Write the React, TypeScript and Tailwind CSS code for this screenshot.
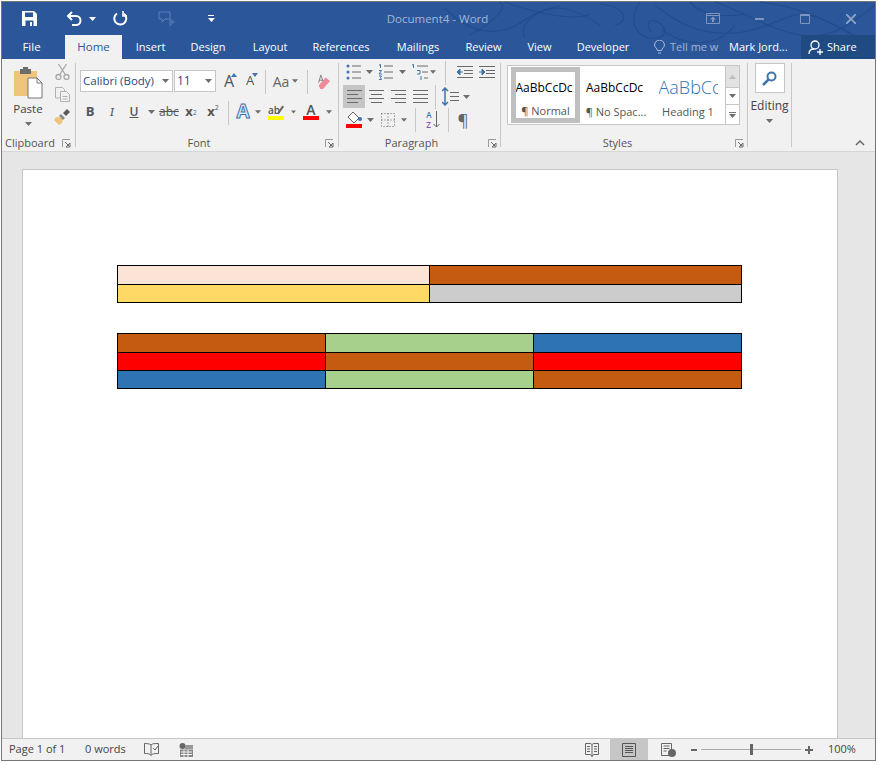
import React from "react";

const Caret = ({ c = "#6e6e6e" }: { c?: string }) => (
  <svg width="7" height="4" viewBox="0 0 7 4"><path d="M0 0h7L3.5 4z" fill={c} /></svg>
);

const Launcher = () => (
  <svg width="9" height="9" viewBox="0 0 9 9" fill="none">
    <path d="M0.5 8V0.5H8" stroke="#9a9a9a" />
    <path d="M3 3l4 4M8 4v4H4z" stroke="#6b6b6b" />
  </svg>
);

const VSep = ({ className }: { className: string }) => (
  <div className={`flex justify-center ${className}`}>
    <div className="w-px h-[24px] bg-[#c6c6c6]" />
  </div>
);

const Lines = ({ ys, x1, x2 }: { ys: number[]; x1: number[]; x2: number[] }) => (
  <>
    {ys.map((y, i) => (
      <path key={i} d={`M${x1[i]} ${y}H${x2[i]}`} stroke="#6a6a6a" />
    ))}
  </>
);

const Align = ({ kind }: { kind: "l" | "c" | "r" | "j" }) => {
  const x1 = kind === "l" || kind === "j" ? [1, 1, 1, 1] : kind === "c" ? [1, 3, 1, 3] : [1, 5, 1, 5];
  const x2 = kind === "j" ? [16, 16, 16, 16] : kind === "l" ? [16, 12, 16, 12] : kind === "c" ? [16, 14, 16, 14] : [16, 16, 16, 16];
  return (
    <svg width="17" height="15" viewBox="0 0 17 15" fill="none">
      <Lines ys={[1.5, 5.5, 9.5, 13.5]} x1={x1} x2={x2} />
    </svg>
  );
};

const Swirls = () => (
  <svg className="absolute left-0 top-[-2px] pointer-events-none" width="873" height="59" viewBox="2 0 873 59" fill="none" stroke="#234d8b" strokeWidth="1.200">
    <path d="M445 8C470 35 500 38 525 20S570 5 600 25" />
    <path d="M505 2C530 12 575 22 590 14" />
    <path d="M525 38C518 25 535 10 560 6" />
    <path d="M640 2C630 15 632 36 650 38S668 28 658 22 645 28 652 32" />
    <path d="M600 4C625 6 630 22 615 25" />
    <path d="M655 5C680 25 700 35 735 33" />
    <path d="M735 33C770 30 790 10 810 15 830 20 860 40 875 45" />
    <path d="M715 2C740 10 770 30 800 35S850 25 875 5" />
    <path d="M760 2C790 5 830 20 850 34" />
    <path d="M662 30C690 50 720 45 735 25" />
    <path d="M470 35C490 24 510 8 500 2" />
    <path d="M690 2C700 14 720 18 745 14" />
  </svg>
);

function TitleBar() {
  return (
    <div className="relative h-[33px] flex items-center text-[#dfe7f2]">
      <Swirls />
      <div className="w-[17px] shrink-0" />
      <div className="relative w-[20px] flex justify-center">
        <svg width="15" height="15" viewBox="0 0 15 15"><path d="M0 0h12l3 3v12H0z" fill="#fff" /><path d="M3 1.500h8v4.500H3z" fill="#2b579a" /><path d="M3.500 9.500h8V15h-8z" fill="#2b579a" /><path d="M8 11h2v4H8z" fill="#fff" /></svg>
      </div>
      <div className="w-[24px]" />
      <div className="relative w-[22px] flex justify-center">
        <svg width="16" height="15" viewBox="0 0 16 15" fill="none" stroke="#fff" strokeWidth="2"><path d="M6 1L2 5l4 4" /><path d="M2 5h8a4.500 4.500 0 0 1 0 9H6" /></svg>
      </div>
      <div className="relative w-[14px] flex justify-center"><Caret c="#fff" /></div>
      <div className="w-[10px]" />
      <div className="relative w-[22px] flex justify-center">
        <svg width="15" height="15" viewBox="0 0 15 15" fill="none" stroke="#fff" strokeWidth="2"><path d="M4 2.500A6 6 0 1 0 11 2.800" /><path d="M10 0v5h4" strokeWidth="1.600" /></svg>
      </div>
      <div className="w-[24px]" />
      <div className="relative w-[22px] flex justify-center">
        <svg width="18" height="16" viewBox="0 0 18 16" fill="none"><path d="M2 1h11v7H8l-3 3V8H2z" stroke="#5f7fb4" /><path d="M12 6l6 5-6 5z" fill="#4a6ea8" /></svg>
      </div>
      <div className="w-[23px]" />
      <div className="relative w-[22px] flex flex-col items-center gap-[2px]">
        <div className="w-[6px] h-px bg-white" />
        <Caret c="#fff" />
      </div>
      <div className="flex-1 text-center text-[11.5px] text-[#a4b6d2] pr-[36px] relative">Document4 - Word</div>
      <div className="flex items-center relative">
        <div className="w-[47px] flex justify-center">
          <svg width="14" height="11" viewBox="0 0 14 11" fill="none"><path d="M.5.500h13v10H.5z" stroke="#7f97c0" /><path d="M.5 2.500h13" stroke="#7f97c0" /><path d="M7 3.500l3 3H8V9H6V6.500H4z" fill="#7f97c0" /></svg>
        </div>
        <div className="w-[46px] flex justify-center"><div className="w-[9px] h-[2px] bg-[#7f97c0]" /></div>
        <div className="w-[46px] flex justify-center">
          <svg width="10" height="10" viewBox="0 0 10 10" fill="none"><path d="M.5.500h9v9h-9z" stroke="#7f97c0" /><path d="M0 1.500h10" stroke="#7f97c0" /></svg>
        </div>
        <div className="w-[46px] flex justify-center">
          <svg width="10" height="10" viewBox="0 0 10 10" stroke="#8fa5c8" strokeWidth="1.800"><path d="M0 0l10 10M10 0L0 10" /></svg>
        </div>
        <div className="w-px" />
      </div>
    </div>
  );
}

function TabsRow() {
  return (
    <div className="relative h-[24px] flex items-stretch text-[11px] text-white leading-[24px] text-center">
      <div className="w-[59px] text-[11.500px]">File</div>
      <div className="w-[4px]" />
      <div className="w-[57px] bg-[#f1f1f1] text-[#2b579a] text-[11.500px]">Home</div>
      <div className="w-[57px]">Insert</div>
      <div className="w-[58px]">Design</div>
      <div className="w-[66px]">Layout</div>
      <div className="w-[76px]">References</div>
      <div className="w-[78px]">Mailings</div>
      <div className="w-[53px]">Review</div>
      <div className="w-[59px]">View</div>
      <div className="w-[68px]">Developer</div>
      <div className="w-[16px]" />
      <div className="w-[12px] flex items-center justify-center">
        <svg width="11" height="15" viewBox="0 0 11 15" fill="none" stroke="#aebfd9"><path d="M3.500 10.500C3 8 .6 7.500.6 5a4.900 4.900 0 0 1 9.800 0c0 2.500-2.400 3-2.900 5.500z" /><path d="M4 13h3" /></svg>
      </div>
      <div className="w-[49px] ml-[5px] overflow-hidden text-left text-[#a4b6d2]">Tell me w</div>
      <div className="w-[10px]" />
      <div className="w-[61px] whitespace-nowrap text-left">Mark Jord...</div>
      <div className="w-[11px]" />
      <div className="flex-1 bg-[#1f4a82] flex items-center pl-[7px] gap-[3px]">
        <svg width="16" height="15" viewBox="0 0 16 15" fill="none" stroke="#fff" strokeWidth="1.300"><circle cx="7" cy="5" r="4" /><path d="M1 14c0-3 2-5 5-5M9 12h6M12 9v6" /></svg>
        <span>Share</span>
      </div>
    </div>
  );
}

const Bullets = () => (
  <svg width="15" height="16" viewBox="0 0 15 16" fill="none">
    <circle cx="2" cy="2" r="1.500" fill="#3f73ad" /><circle cx="2" cy="8" r="1.500" fill="#3f73ad" /><circle cx="2" cy="14" r="1.500" fill="#3f73ad" />
    <path d="M6 2h9M6 8h9M6 14h9" stroke="#6a6a6a" />
  </svg>
);
const Numbered = () => (
  <svg width="15" height="16" viewBox="0 0 15 16" fill="none">
    <path d="M1 1l1.500-.5V4M1 6.500h2.500L1 10h3M1 12h2.500l-1 1.500 1 2H1" stroke="#3f73ad" />
    <path d="M6 2h9M6 8h9M6 14h9" stroke="#6a6a6a" />
  </svg>
);
const Multi = () => (
  <svg width="17" height="16" viewBox="0 0 17 16" fill="none">
    <path d="M1 1l1.500-.5V4M6 6.500h3V10H6M10 12v4" stroke="#3f73ad" />
    <path d="M6 2h11M11 8h6M13 14h4" stroke="#6a6a6a" />
  </svg>
);
const Indent = ({ flip }: { flip?: boolean }) => (
  <svg width="16" height="12" viewBox="0 0 16 12" fill="none">
    <path d="M0 .5h16M7 4.500h9M7 7.500h9M0 11.500h16" stroke="#6a6a6a" />
    {flip ? <path d="M6 6H3M3 3L0 6l3 3z" fill="#3f73ad" stroke="#3f73ad" /> : <path d="M0 6h3M3 3l3 3-3 3z" fill="#3f73ad" stroke="#3f73ad" />}
  </svg>
);

const Label = ({ children }: { children: React.ReactNode }) => (
  <div className="mt-auto h-[16px] flex items-center text-[11px] text-[#555]">{children}</div>
);

const Cell = ({ className, children }: { className: string; children?: React.ReactNode }) => (
  <div className={`flex items-center justify-center ${className}`}>{children}</div>
);

function Clipboard() {
  return (
    <div className="w-[73px] flex flex-col">
      <div className="flex-1 flex">
        <div className="w-[7px]" />
        <div className="w-[38px] flex flex-col items-center pt-[8px]">
          <svg width="30" height="32" viewBox="0 0 30 32" fill="none">
            <path d="M1 4h23v25H1z" fill="#efc47d" />
            <path d="M7 2h11v5H7z" fill="#6d6d6d" /><path d="M10 0h5v3h-5z" fill="#6d6d6d" />
            <path d="M15 11h9l5 5v15H15z" fill="#fff" stroke="#777" />
            <path d="M24 11v5h5" stroke="#777" />
          </svg>
          <div className="text-[11.500px] leading-[16px] mt-[2px] text-[#444]">Paste</div>
          <div className="mt-[5px]"><Caret /></div>
        </div>
        <div className="w-[7px]" />
        <div className="w-[16px] flex flex-col items-center pt-[5px] gap-[7px]">
          <svg width="15" height="16" viewBox="0 0 15 16" fill="none" stroke="#a8a8a8" strokeWidth="1.300"><circle cx="3.500" cy="13" r="2.500" /><circle cx="11.500" cy="13" r="2.500" /><path d="M4.500 11L11.500 0M10.500 11L3.500 0" /></svg>
          <svg width="15" height="15" viewBox="0 0 15 15" fill="#f1f1f1" stroke="#b2b2b2"><path d="M.5.500h7l2 2V11H.5z" /><path d="M5.500 4.500h6l3 3v7h-9z" /><path d="M7.500 9.500h5M7.500 12h5" /></svg>
          <svg width="16" height="16" viewBox="0 0 16 16"><path d="M9 9L2 8l-2 3 5 5 3-2z" fill="#efc47d" /><path d="M7 5l4 4-2 2-4-4z" fill="#8a8a8a" /><path d="M9 4l4-4 3 3-4 4z" fill="#5a5a5a" /></svg>
        </div>
      </div>
      <Label><span className="pl-[3px]">Clipboard</span><span className="ml-auto mr-[4px] flex"><Launcher /></span></Label>
    </div>
  );
}

const BigA = ({ size }: { size: "lg" | "sm" }) => (
  <span className={`relative font-normal text-[#555] ${size === "lg" ? "text-[16px]" : "text-[13px]"}`}>A</span>
);

function Font() {
  return (
    <div className="w-[262px] flex flex-col">
      <div className="flex h-[33px] items-end pl-[4px]">
        <div className="w-[93px] h-[22px] bg-white border border-[#c6c6c6] flex items-center pl-[2px] pr-[3px] text-[11.500px] text-[#2b4a7d]">
          <span className="flex-1 whitespace-nowrap">Calibri (Body)</span><Caret />
        </div>
        <div className="ml-px w-[42px] h-[22px] bg-white border border-[#c6c6c6] flex items-center pl-[2px] pr-[3px] text-[12px] text-[#2b4a7d]">
          <span className="flex-1">11</span><Caret />
        </div>
        <Cell className="w-[22px] h-[22px] ml-[2px] relative">
          <BigA size="lg" />
          <svg className="absolute right-[3px] top-[3px]" width="6" height="4"><path d="M0 4h6L3 0z" fill="#3f73ad" /></svg>
        </Cell>
        <Cell className="w-[20px] h-[22px] relative">
          <BigA size="sm" />
          <svg className="absolute right-[2px] top-[3px]" width="6" height="4"><path d="M0 0h6L3 4z" fill="#3f73ad" /></svg>
        </Cell>
        <VSep className="w-[10px] h-[22px]" />
        <Cell className="w-[22px] h-[22px] text-[14px] text-[#666]">Aa</Cell>
        <Cell className="w-[6px] h-[22px]"><Caret /></Cell>
        <VSep className="w-[18px] h-[22px]" />
        <Cell className="w-[14px] h-[22px] relative">
          <svg width="16" height="17" viewBox="0 0 16 17"><path d="M3 13l8-9 5 4-8 9H5z" fill="#ee8a9a" /><path d="M3 10L5.500 1 8 8M3.500 7h4" stroke="#777" fill="none" /></svg>
        </Cell>
      </div>
      <div className="flex h-[35px] items-center pl-[3px] mt-[2px] text-[#555]">
        <Cell className="w-[22px] h-[22px] font-bold text-[13px]">B</Cell>
        <Cell className="w-[22px] h-[22px] italic text-[13px] font-serif">I</Cell>
        <Cell className="w-[22px] h-[22px] underline font-semibold text-[12px]">U</Cell>
        <Cell className="w-[12px] h-[22px]"><Caret /></Cell>
        <Cell className="w-[24px] h-[22px] text-[12px] line-through">abc</Cell>
        <Cell className="w-[20px] h-[22px] font-bold text-[13px]">x<sub className="text-[7px] text-[#3f73ad] font-normal">2</sub></Cell>
        <Cell className="w-[24px] h-[22px] font-bold text-[13px]">x<sup className="text-[7px] font-normal">2</sup></Cell>
        <VSep className="w-[6px] h-[22px]" />
        <Cell className="w-[24px] h-[22px] text-[19px] font-bold text-[#dfeaf6] [-webkit-text-stroke:1px_#3f73ad]">A</Cell>
        <Cell className="w-[6px] h-[22px]"><Caret /></Cell>
        <Cell className="w-[30px] h-[22px]">
          <div className="flex flex-col items-center relative">
            <div className="w-[16px] h-[13px] flex items-center">
              <span className="text-[10px] leading-[12px] font-semibold">ab</span>
              <svg className="-ml-[3px]" width="9" height="12" viewBox="0 0 9 12" fill="none"><path d="M1 11L8 1" stroke="#666" strokeWidth="2.500" /></svg>
            </div>
            <div className="w-[16px] h-[4px] bg-[#ffff00]" />
          </div>
        </Cell>
        <Cell className="w-[5px] h-[22px]"><Caret /></Cell>
        <Cell className="w-[30px] h-[22px]">
          <div className="flex flex-col items-center leading-[13px]">
            <span className="text-[14px] font-semibold">A</span>
            <div className="w-[16px] h-[4px] bg-[#ff0000]" />
          </div>
        </Cell>
        <Cell className="w-[6px] h-[22px]"><Caret /></Cell>
      </div>
      <Label>
        <span className="flex-1 text-center pr-[2px]">Font</span>
        <span className="ml-[1px] mr-[4px] flex"><Launcher /></span>
      </Label>
    </div>
  );
}

function Paragraph() {
  return (
    <div className="w-[161px] flex flex-col">
      <div className="flex h-[25px] pt-[1px] items-center pl-[3px]">
        <Cell className="w-[22px] h-[22px]"><Bullets /></Cell>
        <Cell className="w-[10px] h-[22px]"><Caret /></Cell>
        <Cell className="w-[22px] h-[22px]"><Numbered /></Cell>
        <Cell className="w-[12px] h-[22px]"><Caret /></Cell>
        <Cell className="w-[22px] h-[22px]"><Multi /></Cell>
        <Cell className="w-[6px] h-[22px]"><Caret /></Cell>
        <VSep className="w-[18px] h-[22px]" />
        <Cell className="w-[22px] h-[22px]"><Indent flip /></Cell>
        <Cell className="w-[22px] h-[22px]"><Indent /></Cell>
      </div>
      <div className="flex h-[24px] items-center pl-[4px] pt-[1px]">
        <Cell className="w-[22px] h-[23px] bg-[#c5c5c5]"><Align kind="l" /></Cell>
        <Cell className="w-[22px] h-[23px]"><Align kind="c" /></Cell>
        <Cell className="w-[22px] h-[23px]"><Align kind="r" /></Cell>
        <Cell className="w-[22px] h-[23px]"><Align kind="j" /></Cell>
        <VSep className="w-[8px] h-[23px]" />
        <Cell className="w-[22px] h-[23px]">
          <svg width="17" height="19" viewBox="0 0 17 19" fill="none"><path d="M3 1v17M0 4l3-3 3 3M0 15l3 3 3-3" stroke="#3f73ad" strokeWidth="1.500" /><path d="M8 5.500h9M8 9.500h9M8 13.500h9" stroke="#6a6a6a" /></svg>
        </Cell>
        <Cell className="w-[10px] h-[23px]"><Caret /></Cell>
      </div>
      <div className="flex h-[23px] items-center pl-[4px]">
        <Cell className="w-[22px] h-[24px]">
          <div className="flex flex-col items-center">
            <svg width="16" height="13" viewBox="0 0 16 13"><path d="M7 1l6 6-5 5-6-6z" fill="#fff" stroke="#666" /><circle cx="14" cy="8" r="2" fill="#3f73ad" /></svg>
            <div className="w-[16px] h-[4px] bg-[#ff0000]" />
          </div>
        </Cell>
        <Cell className="w-[10px] h-[24px]"><Caret /></Cell>
        <Cell className="w-[26px] h-[24px]">
          <svg width="14" height="14" viewBox="0 0 14 14" fill="none" stroke="#666" strokeDasharray="1 2"><path d="M.5.500h13v13H.5zM.5 7h13M7 .5v13" /></svg>
        </Cell>
        <Cell className="w-[6px] h-[24px]"><Caret /></Cell>
        <VSep className="w-[16px] h-[24px]" />
        <Cell className="w-[20px] h-[24px]">
          <div className="flex items-center">
            <div className="flex flex-col text-[8px] leading-[10px] font-semibold">
              <span className="text-[#3f73ad]">A</span>
              <span className="text-[#8a58a8]">Z</span>
            </div>
            <svg className="ml-px" width="7" height="17" viewBox="0 0 7 17" fill="none" stroke="#666"><path d="M3.500 0v16M.5 13l3 3 3-3" /></svg>
          </div>
        </Cell>
        <VSep className="w-[10px] h-[24px]" />
        <Cell className="w-[20px] h-[24px] text-[17px] text-[#666]">¶</Cell>
      </div>
      <Label>
        <span className="flex-1 text-center pl-[15px]">Paragraph</span>
        <span className="ml-[19px] mr-[3px] flex"><Launcher /></span>
      </Label>
    </div>
  );
}

function Styles() {
  return (
    <div className="w-[246px] flex flex-col">
      <div className="flex h-[76px] pt-[6px] pl-[6px]">
        <div className="w-[233px] h-[60px] border border-[#c6c6c6] bg-white flex">
          <div className="w-[3px]" />
          <div className="w-[69px] mt-[1px] mb-[1px] border-[5px] border-[#bfbfbf] flex flex-col items-center overflow-hidden">
            <div className="w-[58px] -ml-[2px] overflow-hidden whitespace-nowrap text-[12px] leading-[16px] mt-[8px] text-black">AaBbCcDc</div>
            <div className="text-[11px] leading-[14px] mt-[9px] text-[#555] whitespace-nowrap">¶ Normal</div>
          </div>
          <div className="w-[72px] flex flex-col items-center">
            <div className="w-[60px] overflow-hidden whitespace-nowrap text-[12px] leading-[16px] mt-[14px] text-black">AaBbCcDc</div>
            <div className="text-[11px] leading-[14px] mt-[9px] text-[#555] whitespace-nowrap">¶ No Spac...</div>
          </div>
          <div className="w-[72px] flex flex-col items-center">
            <div className="w-[59px] overflow-hidden whitespace-nowrap text-[18px] font-light leading-[24px] mt-[9px] text-[#2e74b5]">AaBbCc</div>
            <div className="text-[11px] leading-[14px] mt-[6px] text-[#555]">Heading 1</div>
          </div>
          <div className="w-[14px] ml-auto flex flex-col border-l border-[#c6c6c6]">
            <Cell className="h-[21px] bg-[#e2e2e2]"><svg width="7" height="4"><path d="M0 4h7L3.500 0z" fill="#bcbcbc" /></svg></Cell>
            <Cell className="h-[18px] border-y border-[#c6c6c6]"><Caret /></Cell>
            <Cell className="flex-1 flex-col gap-[1px]"><div className="w-[7px] h-px bg-[#767676]" /><Caret /></Cell>
          </div>
        </div>
      </div>
      <Label>
        <span className="flex-1 text-center pl-[1px]">Styles</span>
        <span className="ml-[2px] mr-[3px] flex"><Launcher /></span>
      </Label>
    </div>
  );
}

function Editing() {
  return (
    <div className="w-[43px] flex flex-col items-center pt-[4px]">
      <div className="w-[30px] h-[30px] bg-white border border-[#c6c6c6] flex items-center justify-center">
        <svg width="15" height="15" viewBox="0 0 15 15" fill="none" stroke="#3f73ad"><circle cx="9.500" cy="5.500" r="4" strokeWidth="2" /><path d="M6.500 8.500L1 14" strokeWidth="2.500" /></svg>
      </div>
      <div className="text-[12px] leading-[16px] mt-[5px] text-[#444]">Editing</div>
      <div className="mt-[5px]"><Caret /></div>
    </div>
  );
}

const GroupSep = () => <div className="w-px my-[4px] bg-[#c8c8c8]" />;

function Ribbon() {
  return (
    <div className="h-[92px] bg-[#f1f1f1] flex">
      <Clipboard />
      <GroupSep />
      <Font />
      <GroupSep />
      <Paragraph />
      <GroupSep />
      <Styles />
      <GroupSep />
      <Editing />
      <GroupSep />
      <div className="flex-1 flex flex-col justify-end items-end pr-[10px] pb-[5px]">
        <svg width="10" height="6" viewBox="0 0 10 6" fill="none" stroke="#666" strokeWidth="1.500"><path d="M1 5l4-4 4 4" /></svg>
      </div>
    </div>
  );
}

function Document() {
  return (
    <div className="flex-1 min-h-0 bg-[#e6e6e6] overflow-hidden border-t border-[#d6d6d6] pl-[20px] pt-[17px]">
      <div className="w-[816px] h-full bg-white border border-[#c6c6c6] border-b-0 pl-[94px] pt-[95px]">
        <div className="w-[625px] grid grid-cols-[311px_311px] grid-rows-[18px_17px] gap-px p-px bg-black">
          <div className="bg-[#fbe4d5]" />
          <div className="bg-[#c55a11]" />
          <div className="bg-[#ffd966]" />
          <div className="bg-[#cccccc]" />
        </div>
        <div className="w-[625px] mt-[30px] grid grid-cols-[207px_207px_207px] grid-rows-[18px_17px_17px] gap-px p-px bg-black">
          <div className="bg-[#c55a11]" />
          <div className="bg-[#a8d08d]" />
          <div className="bg-[#2e74b5]" />
          <div className="bg-[#ff0000]" />
          <div className="bg-[#c55a11]" />
          <div className="bg-[#ff0000]" />
          <div className="bg-[#2e74b5]" />
          <div className="bg-[#a8d08d]" />
          <div className="bg-[#c55a11]" />
        </div>
      </div>
    </div>
  );
}

function StatusBar() {
  return (
    <div className="h-[22px] bg-[#f1f1f1] border-t border-[#c6c6c6] flex items-center text-[11px] text-[#444] pl-[7px]">
      <span className="w-[76px]">Page 1 of 1</span>
      <span className="w-[59px]">0 words</span>
      <svg width="15" height="14" viewBox="0 0 15 14" fill="none" stroke="#666"><path d="M7 2C5 .5 3 .5 .5 .5v10c3 0 5 0 6.500 2 1.500-2 3.500-2 7.500-2V.5c-4 0-6 0-7.500 1.500zM7 2v10" /><path d="M9 5l2 2 3-4" /></svg>
      <div className="w-[20px]" />
      <svg width="14" height="14" viewBox="0 0 14 14"><circle cx="3.500" cy="3" r="3" fill="#666" /><path d="M1 6.500h13V14H1z" fill="#888" /><path d="M6 2h8v4H6z" fill="#999" /><path d="M2 9h11M2 11.500h11M5 7v7M9 7v7" stroke="#f1f1f1" /></svg>
      <div className="flex-1" />
      <Cell className="w-[36px] h-full">
        <svg width="14" height="14" viewBox="0 0 14 14" fill="none" stroke="#666"><path d="M.5.500h5l1.500 1 1.500-1h5v11h-5l-1.500 2-1.500-2h-5zM7 1.500v12M2 3.500h3M2 6h3M2 8.500h3M9 3.500h3M9 6h3M9 8.500h3" /></svg>
      </Cell>
      <Cell className="w-[38px] h-full bg-[#c6c6c6]">
        <svg width="14" height="14" viewBox="0 0 14 14" fill="none" stroke="#555"><path d="M.5.500h13v13H.5zM3 3.500h8M3 5.500h8M3 7.500h8M3 9.500h8" /></svg>
      </Cell>
      <Cell className="w-[40px] h-full">
        <svg width="15" height="14" viewBox="0 0 15 14" fill="none"><path d="M.5.500h10v12H.5zM2.500 3h6M2.500 5.500h6M2.500 8h3" stroke="#666" /><circle cx="11" cy="10" r="4" fill="#666" /></svg>
      </Cell>
      <div className="w-[6px] h-[2px] ml-[3px] bg-[#666]" />
      <div className="w-[100px] ml-[4px] h-px bg-[#a8a8a8] flex justify-center items-center">
        <div className="w-[3px] h-[11px] bg-[#666] shrink-0" />
      </div>
      <svg className="ml-[4px]" width="8" height="8" viewBox="0 0 8 8" stroke="#666" strokeWidth="2"><path d="M0 4h8M4 0v8" /></svg>
      <span className="ml-[15px] w-[47px]">100%</span>
    </div>
  );
}

export default function App() {
  return (
    <div className="w-[878px] h-[765px] bg-white overflow-hidden pt-px pl-px font-['Open_Sans','Noto_Sans',sans-serif]">
      <div className="w-[875px] h-[760px] border border-[#767676] flex flex-col bg-[#2b579a]">
        <TitleBar />
        <TabsRow />
        <Ribbon />
        <Document />
        <StatusBar />
      </div>
    </div>
  );
}
